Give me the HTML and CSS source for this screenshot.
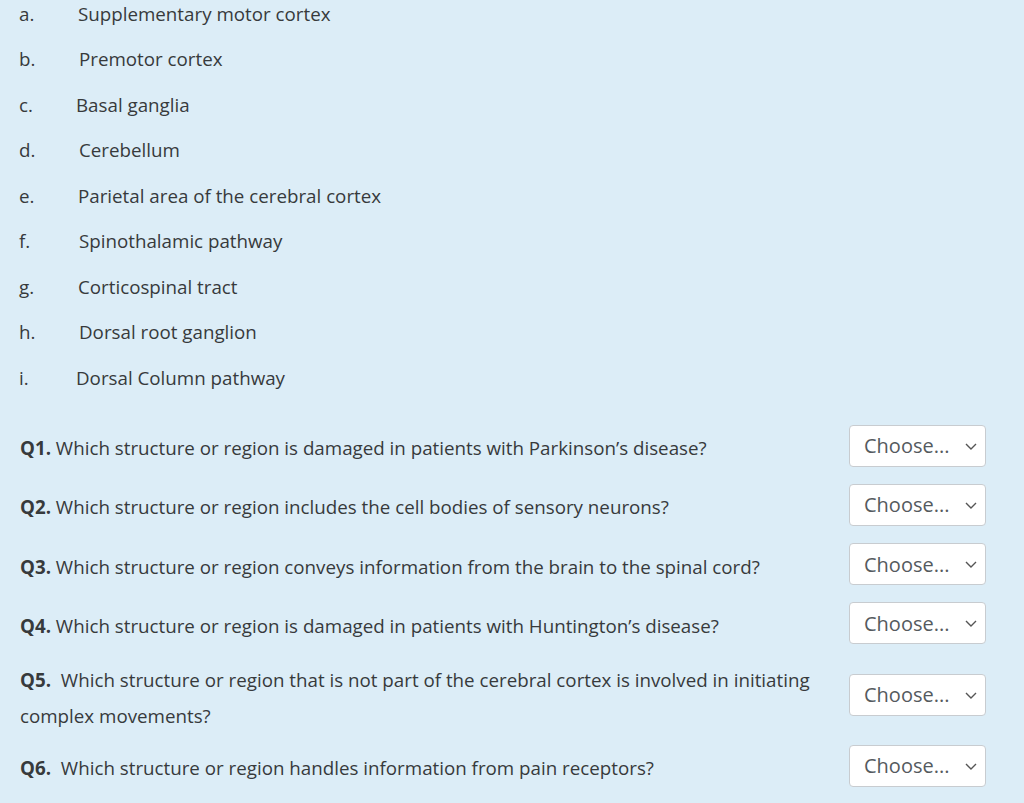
FILE: index.html
```html
<!DOCTYPE html>
<html>
<head>
<meta charset="utf-8">
<link rel="stylesheet" href="styles.css">
</head>
<body>
<div class="page">
  <ol class="options">
    <li><span class="lbl">a.</span><span class="txt">Supplementary motor cortex</span></li>
    <li><span class="lbl">b.</span><span class="txt shift-r">Premotor cortex</span></li>
    <li><span class="lbl">c.</span><span class="txt shift-l">Basal ganglia</span></li>
    <li><span class="lbl">d.</span><span class="txt shift-r">Cerebellum</span></li>
    <li><span class="lbl">e.</span><span class="txt">Parietal area of the cerebral cortex</span></li>
    <li><span class="lbl">f.</span><span class="txt shift-r">Spinothalamic pathway</span></li>
    <li><span class="lbl">g.</span><span class="txt">Corticospinal tract</span></li>
    <li><span class="lbl">h.</span><span class="txt shift-r">Dorsal root ganglion</span></li>
    <li><span class="lbl">i.</span><span class="txt shift-l">Dorsal Column pathway</span></li>
  </ol>

  <div class="questions">
    <div class="q">
      <p class="qtext"><b>Q1.</b> Which structure or region is damaged in patients with Parkinson’s disease?</p>
      <div class="sel"><span>Choose...</span><svg class="chev" viewBox="0 0 12 7" width="12" height="7"><path d="M1 1 L6 6 L11 1" fill="none" stroke="#555" stroke-width="1.4"/></svg></div>
    </div>
    <div class="q">
      <p class="qtext"><b>Q2.</b> Which structure or region includes the cell bodies of sensory neurons?</p>
      <div class="sel"><span>Choose...</span><svg class="chev" viewBox="0 0 12 7" width="12" height="7"><path d="M1 1 L6 6 L11 1" fill="none" stroke="#555" stroke-width="1.4"/></svg></div>
    </div>
    <div class="q">
      <p class="qtext"><b>Q3.</b> Which structure or region conveys information from the brain to the spinal cord?</p>
      <div class="sel"><span>Choose...</span><svg class="chev" viewBox="0 0 12 7" width="12" height="7"><path d="M1 1 L6 6 L11 1" fill="none" stroke="#555" stroke-width="1.4"/></svg></div>
    </div>
    <div class="q">
      <p class="qtext"><b>Q4.</b> Which structure or region is damaged in patients with Huntington’s disease?</p>
      <div class="sel"><span>Choose...</span><svg class="chev" viewBox="0 0 12 7" width="12" height="7"><path d="M1 1 L6 6 L11 1" fill="none" stroke="#555" stroke-width="1.4"/></svg></div>
    </div>
    <div class="q q-wide">
      <p class="qtext"><b class="qn">Q5.</b> Which structure or region that is not part of the cerebral cortex is involved in initiating complex movements?</p>
      <div class="sel"><span>Choose...</span><svg class="chev" viewBox="0 0 12 7" width="12" height="7"><path d="M1 1 L6 6 L11 1" fill="none" stroke="#555" stroke-width="1.4"/></svg></div>
    </div>
    <div class="q">
      <p class="qtext"><b class="qn">Q6.</b> Which structure or region handles information from pain receptors?</p>
      <div class="sel"><span>Choose...</span><svg class="chev" viewBox="0 0 12 7" width="12" height="7"><path d="M1 1 L6 6 L11 1" fill="none" stroke="#555" stroke-width="1.4"/></svg></div>
    </div>
  </div>
</div>
</body>
</html>
```

FILE: styles.css
```css
html, body {
  margin: 0;
  padding: 0;
  background: #dcedf7;
}
body {
  font-family: "Open Sans", "Liberation Sans", sans-serif;
  font-size: 18.75px;
  color: #373a3c;
  width: 1024px;
  height: 803px;
  overflow: hidden;
}
.page {
  padding: 0 38px 0 19px;
}
.options {
  list-style: none;
  margin: 0;
  padding: 0;
}
.options li {
  display: flex;
  line-height: 27px;
  height: 27px;
  margin-bottom: 18.5px;
}
.options li:first-child {
  margin-top: -0.5px;
}
.lbl {
  width: 59px;
  flex: none;
}
.txt.shift-l {
  margin-left: -2px;
}
.txt.shift-r {
  margin-left: 1px;
}
.questions {
  margin-top: 34px;
  display: flex;
  flex-direction: column;
}
.q {
  display: flex;
  align-items: center;
  justify-content: space-between;
  min-height: 42px;
  margin-bottom: 17.3px;
}
.q-wide {
  margin-top: 0;
  margin-bottom: 11px;
  align-items: flex-start;
}
.q-wide .sel {
  margin-top: 12px;
}
.qtext {
  margin: 0 0 0 1px;
  padding-top: 5px;
  line-height: 36px;
  width: 800px;
}
.q-wide .qtext {
  padding-top: 0;
}
.qtext b {
  font-weight: 700;
}
.qtext .qn {
  margin-right: 5px;
}
.sel {
  flex: none;
  box-sizing: border-box;
  width: 137px;
  height: 42px;
  background: #fff;
  border: 1px solid #c8ccd0;
  border-radius: 4px;
  display: flex;
  align-items: center;
  justify-content: space-between;
  padding: 0 8px 0 14px;
  color: #555a5e;
  font-size: 20px;
}
.chev {
  margin-top: 1px;
}
```
